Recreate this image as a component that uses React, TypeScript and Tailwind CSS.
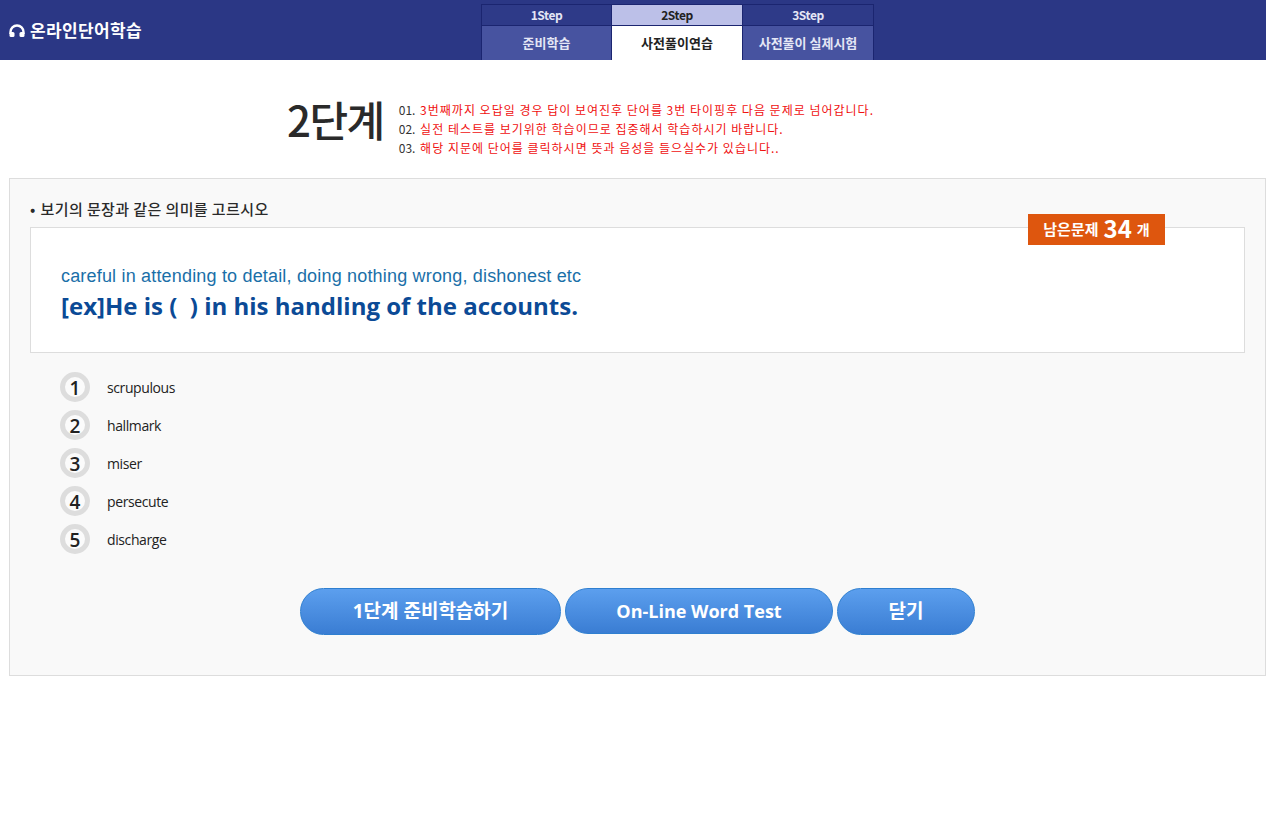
const korean = "font-['Noto_Sans_CJK_KR','Noto_Sans',sans-serif]";

const steps = [
  { step: "1Step", label: "준비학습", width: "w-[130px]" },
  { step: "2Step", label: "사전풀이연습", width: "w-[131px]", active: true },
  { step: "3Step", label: "사전풀이 실제시험", width: "w-[131px]" },
];

const notices = [
  "3번째까지 오답일 경우 답이 보여진후 단어를 3번 타이핑후 다음 문제로 넘어갑니다.",
  "실전 테스트를 보기위한 학습이므로 집중해서 학습하시기 바랍니다.",
  "해당 지문에 단어를 클릭하시면 뜻과 음성을 들으실수가 있습니다..",
];

const choices = ["scrupulous", "hallmark", "miser", "persecute", "discharge"];

const buttonClass =
  "flex items-center justify-center rounded-[24px] border border-[#2f7fd0] bg-gradient-to-b from-[#5c9fee] to-[#3a7dd3] font-bold text-white";

function Headset() {
  return (
    <svg width="16" height="13" viewBox="0 0 16 13" fill="none">
      <path d="M1.5 10V8a6.5 6.5 0 0 1 13 0v2" stroke="white" strokeWidth="2.4" />
      <rect x="0.5" y="8" width="5" height="5" rx="1.5" fill="white" />
      <rect x="10.5" y="8" width="5" height="5" rx="1.5" fill="white" />
    </svg>
  );
}

export default function App() {
  return (
    <div className={`min-h-[833px] bg-white ${korean}`}>
      {/* Top bar */}
      <div className="flex h-[60px] bg-[#2b3785]">
        <div className="flex w-[481px] items-center gap-[5px] pl-[9px] text-[17px] font-bold tracking-[0.35px] text-white">
          <Headset />
          <span>온라인단어학습</span>
        </div>
        <div className="mt-[4px] flex h-[56px] border-l border-[#1b2570]">
          {steps.map((s) => (
            <div
              key={s.step}
              className={`flex flex-col border-r border-[#1b2570] text-center text-[13px] font-bold ${s.width}`}
            >
              <div
                className={`flex h-[22px] items-center justify-center border-y border-[#1b2570] text-[12px] tracking-[-0.4px] ${s.active ? "bg-[#bcc0e8] text-[#222]" : "bg-[#2e3a88] text-[#e4e6f5]"}`}
              >
                {s.step}
              </div>
              <div
                className={`flex flex-1 items-center justify-center ${s.active ? "bg-white text-[#222]" : "bg-[#4753a0] text-[#e4e6f5]"}`}
              >
                {s.label}
              </div>
            </div>
          ))}
        </div>
      </div>

      {/* Step title */}
      <div className="flex h-[118px] pl-[287px]">
        <div className="mt-[29px] h-[60px] text-[42px] font-medium leading-[60px] tracking-[-1.5px] text-[#2a2a2a]">
          2단계
        </div>
        <div className="ml-[15px] mt-[40px] text-[12px] leading-[19px] tracking-[1px] text-[#f01010]">
          {notices.map((n, i) => (
            <div key={n} className="whitespace-nowrap">
              <span className="mr-[2px] tracking-[0px] text-[#333]">0{i + 1}. </span>
              {n}
            </div>
          ))}
        </div>
      </div>

      {/* Question panel */}
      <div className="ml-[9px] h-[498px] border border-[#dddddd] bg-[#f9f9f9] px-[20px] pt-[20px]">
        <div className="h-[28px] text-[15px] font-medium leading-[20px] tracking-[0.4px] text-[#2a2a2a]">
          <span className="mr-[1px]">•</span> 보기의 문장과 같은 의미를 고르시오
        </div>
        <div className="relative h-[126px] border border-[#dddddd] bg-white pl-[30px] pt-[36px]">
          <div className="absolute right-[79px] top-[-14px] flex h-[31px] w-[137px] items-center justify-center gap-[5px] bg-[#de560e] font-bold text-white">
            <span className="text-[15px]">남은문제</span>
            <span className="-mt-[3px] text-[24px] leading-none">34</span>
            <span className="text-[14px]">개</span>
          </div>
          <div className="font-['Liberation_Sans',sans-serif] text-[18px] leading-[24px] tracking-[0.18px] text-[#1a6fa8]">
            careful in attending to detail, doing nothing wrong, dishonest etc
          </div>
          <div className="font-['Open_Sans',sans-serif] text-[24px] font-bold leading-[36px] text-[#0b4a96]">
            [ex]He is (&nbsp;&nbsp;) in his handling of the accounts.
          </div>
        </div>

        <div className="mt-[19px] flex flex-col gap-[8px] pl-[30px]">
          {choices.map((c, i) => (
            <div key={c} className="flex h-[30px] items-center">
              <div className="flex h-[30px] w-[30px] items-center justify-center rounded-full border-[5px] border-[#dddddd] bg-[#fbfbfb] pt-[2px] font-['Open_Sans',sans-serif] text-[19px] font-semibold text-[#222]">
                {i + 1}
              </div>
              <span className="ml-[17px] font-['Open_Sans',sans-serif] text-[14px] font-medium tracking-[-0.4px] text-[#222]">
                {c}
              </span>
            </div>
          ))}
        </div>

        <div className="mt-[34px] flex justify-center gap-[4px] font-['Open_Sans','Noto_Sans_CJK_KR',sans-serif]">
          <button className={`${buttonClass} h-[47px] w-[261px] text-[19px]`}>1단계 준비학습하기</button>
          <button className={`${buttonClass} h-[46px] w-[268px] text-[18px]`}>On-Line Word Test</button>
          <button className={`${buttonClass} h-[47px] w-[138px] text-[19px]`}>닫기</button>
        </div>
      </div>
    </div>
  );
}
